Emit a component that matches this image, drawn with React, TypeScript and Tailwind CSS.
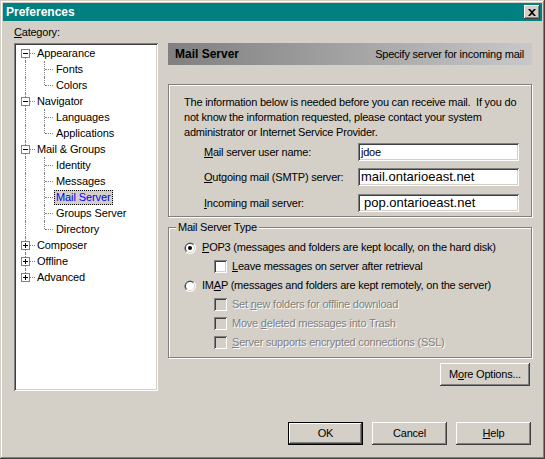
import React from "react";

const raised =
  "shadow-[inset_-1px_-1px_#404040,inset_1px_1px_#ffffff,inset_-2px_-2px_#808080,inset_2px_2px_#d4d0c8]";
const sunken =
  "shadow-[inset_1px_1px_#808080,inset_-1px_-1px_#ffffff,inset_2px_2px_#404040,inset_-2px_-2px_#d4d0c8]";
const disabledText = "text-[#808080] [text-shadow:1px_1px_0_#ffffff]";

type Node = { label: string; open: boolean; children: string[] };

const tree: Node[] = [
  { label: "Appearance", open: true, children: ["Fonts", "Colors"] },
  { label: "Navigator", open: true, children: ["Languages", "Applications"] },
  {
    label: "Mail & Groups",
    open: true,
    children: ["Identity", "Messages", "Mail Server", "Groups Server", "Directory"],
  },
  { label: "Composer", open: false, children: [] },
  { label: "Offline", open: false, children: [] },
  { label: "Advanced", open: false, children: [] },
];

function Expander({ open }: { open: boolean }) {
  return (
    <span className="absolute left-[5px] top-[4px] flex h-[9px] w-[9px] items-center justify-center border border-[#808080] bg-white">
      <svg width="7" height="7" viewBox="0 0 7 7">
        <rect x="1" y="3" width="5" height="1" fill="#000" />
        {!open && <rect x="3" y="1" width="1" height="5" fill="#000" />}
      </svg>
    </span>
  );
}

function TopRow({ node, first, last }: { node: Node; first: boolean; last: boolean }) {
  return (
    <div className="relative flex h-[16px] items-center">
      <span
        className={
          "absolute left-[9px] w-0 border-l border-dotted border-[#808080] " +
          (first ? "top-[8px] " : "top-0 ") +
          (last ? "bottom-[8px]" : "bottom-0")
        }
      />
      <span className="absolute left-[14px] top-[8px] w-[5px] border-t border-dotted border-[#808080]" />
      <Expander open={node.open} />
      <span className="ml-[21px] whitespace-nowrap">{node.label}</span>
    </div>
  );
}

function ChildRow({ label, last }: { label: string; last: boolean }) {
  const selected = label === "Mail Server";
  return (
    <div className="relative flex h-[16px] items-center">
      <span className="absolute bottom-0 left-[9px] top-0 w-0 border-l border-dotted border-[#808080]" />
      <span
        className={
          "absolute left-[28px] top-0 w-0 border-l border-dotted border-[#808080] " +
          (last ? "bottom-[8px]" : "bottom-0")
        }
      />
      <span className="absolute left-[29px] top-[8px] w-[8px] border-t border-dotted border-[#808080]" />
      {selected ? (
        <span className="ml-[38px] whitespace-nowrap border border-dotted border-black bg-[#d4d0c8] px-[1px] leading-[13px] text-[#0000ff]">
          {label}
        </span>
      ) : (
        <span className="ml-[40px] whitespace-nowrap">{label}</span>
      )}
    </div>
  );
}

function Radio({ checked }: { checked: boolean }) {
  return (
    <svg width="12" height="12" viewBox="0 0 12 12" className="shrink-0">
      <circle cx="6" cy="6" r="6" fill="#ffffff" />
      <path d="M1.76 10.24 A6 6 0 0 1 10.24 1.76 Z" fill="#808080" />
      <circle cx="6" cy="6" r="5" fill="#d4d0c8" />
      <path d="M2.46 9.54 A5 5 0 0 1 9.54 2.46 Z" fill="#404040" />
      <circle cx="6" cy="6" r="4" fill="#ffffff" />
      {checked && <circle cx="6" cy="6" r="2" fill="#000000" />}
    </svg>
  );
}

function Check({ disabled }: { disabled?: boolean }) {
  return (
    <span
      className={
        "h-[13px] w-[13px] shrink-0 " + sunken + (disabled ? " bg-[#d4d0c8]" : " bg-white")
      }
    />
  );
}

function Field({ label, value, big, pad }: { label: React.ReactNode; value: string; big?: boolean; pad: string }) {
  return (
    <div className="flex h-[18px] items-center pl-[20px]">
      <span className="w-[154px] whitespace-nowrap">{label}</span>
      <div
        className={
          "flex h-[18px] w-[161px] items-center bg-white " +
          sunken +
          " " +
          pad +
          (big ? " text-[13px] tracking-normal" : " text-[11px]")
        }
      >
        {value}
      </div>
    </div>
  );
}

function Button({
  children,
  width,
  isDefault,
}: {
  children: React.ReactNode;
  width: string;
  isDefault?: boolean;
}) {
  return (
    <div
      className={
        "flex h-[23px] items-center justify-center bg-[#d4d0c8] " +
        width +
        " " +
        raised +
        (isDefault ? " border border-black" : "")
      }
    >
      {children}
    </div>
  );
}

export default function App() {
  return (
    <div
      className={
        "flex h-[459px] w-[545px] flex-col bg-[#d4d0c8] p-[3px] font-['Liberation_Sans',Arial,sans-serif] text-[11px] tracking-[-0.22px] text-black " +
        "shadow-[inset_-1px_-1px_#404040,inset_1px_1px_#d4d0c8,inset_-2px_-2px_#808080,inset_2px_2px_#ffffff]"
      }
    >
      {/* title bar */}
      <div className="flex h-[18px] items-center justify-between bg-[#008080] pl-[3px] pr-[2px]">
        <span className="text-[12px] font-bold tracking-normal text-white">Preferences</span>
        <div className={"flex h-[14px] w-[16px] items-center justify-center bg-[#d4d0c8] " + raised}>
          <svg width="8" height="7" viewBox="0 0 8 7">
            <path d="M0 0h2l2 2 2-2h2L5 3.5 8 7H6L4 5 2 7H0l3-3.5Z" fill="#000" />
          </svg>
        </div>
      </div>

      <div className="flex flex-1 flex-col pb-[11px] pl-[11px] pr-[10px]">
        <div className="flex">
          {/* category tree */}
          <div className="flex w-[144px] flex-col">
            <div className="flex h-[22px] items-center">
              <span>
                <u>C</u>ategory:
              </span>
            </div>
            <div className={"h-[348px] bg-white p-[2px] tracking-[-0.1px] " + sunken}>
              {tree.map((node, i) => (
                <React.Fragment key={node.label}>
                  <TopRow node={node} first={i === 0} last={i === tree.length - 1} />
                  {node.children.map((c, j) => (
                    <ChildRow key={c} label={c} last={j === node.children.length - 1} />
                  ))}
                </React.Fragment>
              ))}
            </div>
          </div>

          {/* right panel */}
          <div className="ml-[10px] flex w-[364px] flex-col pt-[22px]">
            <div className="flex h-[22px] items-center justify-between bg-linear-to-r from-[#808080] to-[#c8c8c8] pl-[7px] pr-[8px]">
              <span className="text-[12px] font-bold tracking-normal">Mail Server</span>
              <span>Specify server for incoming mail</span>
            </div>

            <div className="mt-[19px] border border-[#808080] pb-[4px] pl-[15px] pt-[10px] shadow-[1px_1px_0_#ffffff,inset_1px_1px_0_#ffffff]">
              <p className="whitespace-pre leading-[15px]">
                {"The information below is needed before you can receive mail.  If you do\nnot know the information requested, please contact your system\nadministrator or Internet Service Provider."}
              </p>
              <div className="mt-[3px] flex flex-col">
                <Field
                  label={
                    <>
                      <u>M</u>ail server user name:
                    </>
                  }
                  value="jdoe"
                  pad="pl-[3px]"
                />
                <div className="mt-[7px]">
                  <Field
                    label={
                      <>
                        <u>O</u>utgoing mail (SMTP) server:
                      </>
                    }
                    value="mail.ontarioeast.net"
                    big
                    pad="pl-[3px]"
                  />
                </div>
                <div className="mt-[8px]">
                  <Field
                    label={
                      <>
                        <u>I</u>ncoming mail server:
                      </>
                    }
                    value="pop.ontarioeast.net"
                    big
                    pad="pl-[6px]"
                  />
                </div>
              </div>
            </div>

            <fieldset className="mt-[4px] border border-[#808080] px-0 pb-[5px] pt-[4px] shadow-[1px_1px_0_#ffffff,inset_1px_1px_0_#ffffff]">
              <legend className="ml-[7px] bg-[#d4d0c8] px-[2px] leading-[13px]">Mail Server Type</legend>
              <div className="flex flex-col pl-[15px]">
                <div className="flex h-[19px] items-center gap-[6px]">
                  <Radio checked />
                  <span>
                    <u>P</u>OP3 (messages and folders are kept locally, on the hard disk)
                  </span>
                </div>
                <div className="flex h-[19px] items-center gap-[5px] pl-[30px]">
                  <Check />
                  <span>
                    <u>L</u>eave messages on server after retrieval
                  </span>
                </div>
                <div className="flex h-[19px] items-center gap-[6px]">
                  <Radio checked={false} />
                  <span>
                    IM<u>A</u>P (messages and folders are kept remotely, on the server)
                  </span>
                </div>
                <div className="flex h-[19px] items-center gap-[5px] pl-[30px]">
                  <Check disabled />
                  <span className={disabledText}>
                    Set <u>n</u>ew folders for offline download
                  </span>
                </div>
                <div className="flex h-[19px] items-center gap-[5px] pl-[30px]">
                  <Check disabled />
                  <span className={disabledText}>
                    Move <u>d</u>eleted messages into Trash
                  </span>
                </div>
                <div className="flex h-[19px] items-center gap-[5px] pl-[30px]">
                  <Check disabled />
                  <span className={disabledText}>
                    <u>S</u>erver supports encrypted connections (SSL)
                  </span>
                </div>
              </div>
            </fieldset>

            <div className="mr-[2px] mt-[5px] self-end">
              <Button width="w-[90px]">
                <span>
                  M<u>o</u>re Options...
                </span>
              </Button>
            </div>
          </div>
        </div>

        <div className="mr-[1px] mt-auto flex justify-end gap-[9px]">
          <Button width="w-[75px]" isDefault>
            OK
          </Button>
          <Button width="w-[75px]">Cancel</Button>
          <Button width="w-[75px]">
            <span>
              <u>H</u>elp
            </span>
          </Button>
        </div>
      </div>
    </div>
  );
}
